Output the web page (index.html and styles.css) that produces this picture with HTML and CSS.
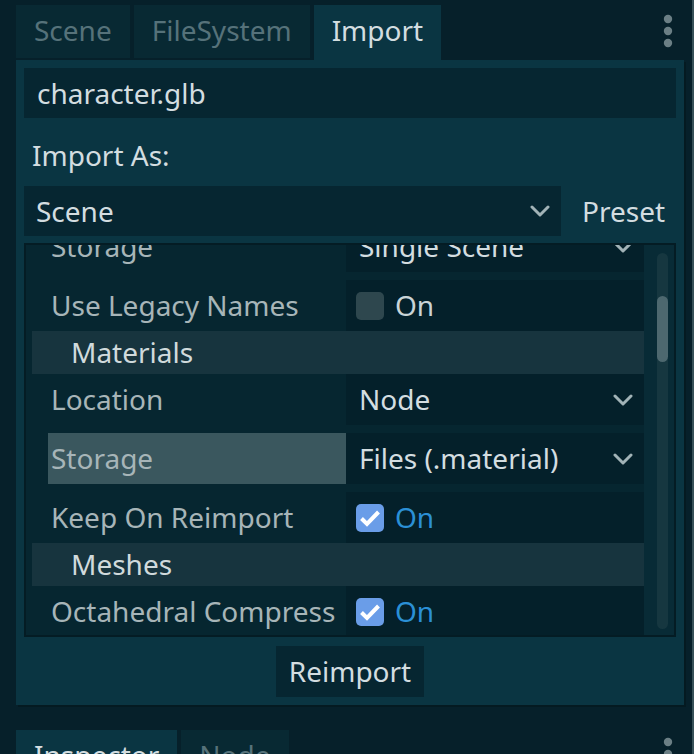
FILE: index.html
```html
<!DOCTYPE html>
<html lang="en">
<head>
  <meta charset="UTF-8">
  <meta name="viewport" content="width=device-width, initial-scale=1.0">
  <title>Import</title>
  <link rel="stylesheet" href="styles.css">
</head>
<body>
  <div class="editor">
    <div class="dock">
      <div class="tab-bar">
        <div class="tabs">
          <div class="tab">Scene</div>
          <div class="tab">FileSystem</div>
          <div class="tab active">Import</div>
        </div>
        <svg class="menu-dots" width="10" height="34" viewBox="0 0 10 34">
          <circle cx="5" cy="5" r="4.2"/>
          <circle cx="5" cy="17" r="4.2"/>
          <circle cx="5" cy="29" r="4.2"/>
        </svg>
      </div>

      <div class="dock-panel">
        <div class="line-edit">character.glb</div>
        <div class="field-label">Import As:</div>
        <div class="import-row">
          <div class="option-button">
            <span>Scene</span>
            <svg class="chevron" width="20" height="12" viewBox="0 0 20 12"><polyline points="2,2 10,10 18,2"/></svg>
          </div>
          <div class="flat-button">Preset</div>
        </div>

        <div class="inspector">
          <div class="inspector-scroll">
            <div class="inspector-content">
              <div class="prop">
                <div class="prop-label">Storage</div>
                <div class="prop-value">
                  <span>Single Scene</span>
                  <svg class="chevron" width="20" height="12" viewBox="0 0 20 12"><polyline points="2,2 10,10 18,2"/></svg>
                </div>
              </div>
              <div class="prop">
                <div class="prop-label">Use Legacy Names</div>
                <div class="prop-value check-value">
                  <span class="checkbox"></span>
                  <span>On</span>
                </div>
              </div>
              <div class="section">Materials</div>
              <div class="prop">
                <div class="prop-label">Location</div>
                <div class="prop-value">
                  <span>Node</span>
                  <svg class="chevron" width="20" height="12" viewBox="0 0 20 12"><polyline points="2,2 10,10 18,2"/></svg>
                </div>
              </div>
              <div class="prop">
                <div class="prop-label hovered">Storage</div>
                <div class="prop-value">
                  <span>Files (.material)</span>
                  <svg class="chevron" width="20" height="12" viewBox="0 0 20 12"><polyline points="2,2 10,10 18,2"/></svg>
                </div>
              </div>
              <div class="prop">
                <div class="prop-label">Keep On Reimport</div>
                <div class="prop-value check-value checked">
                  <span class="checkbox">
                    <svg width="28" height="28" viewBox="0 0 28 28"><polyline points="5.5,14.5 11,20 22.5,8"/></svg>
                  </span>
                  <span>On</span>
                </div>
              </div>
              <div class="section">Meshes</div>
              <div class="prop">
                <div class="prop-label">Octahedral Compress</div>
                <div class="prop-value check-value checked">
                  <span class="checkbox">
                    <svg width="28" height="28" viewBox="0 0 28 28"><polyline points="5.5,14.5 11,20 22.5,8"/></svg>
                  </span>
                  <span>On</span>
                </div>
              </div>
            </div>
          </div>
          <div class="scrollbar">
            <div class="scroll-track">
              <div class="scroll-thumb"></div>
            </div>
          </div>
        </div>

        <div class="button-row">
          <div class="button">Reimport</div>
        </div>
      </div>
    </div>

    <div class="dock dock-bottom">
      <div class="tab-bar">
        <div class="tabs">
          <div class="tab active">Inspector</div>
          <div class="tab">Node</div>
        </div>
        <svg class="menu-dots" width="10" height="34" viewBox="0 0 10 34">
          <circle cx="5" cy="5" r="4.2"/>
          <circle cx="5" cy="17" r="4.2"/>
          <circle cx="5" cy="29" r="4.2"/>
        </svg>
      </div>
    </div>
  </div>
</body>
</html>
```

FILE: styles.css
```css
html, body {
    margin: 0;
    height: 100%;
    overflow: hidden;
}

body {
    background-color: #06202a;
    font-family: "Noto Sans", "DejaVu Sans", sans-serif;
    font-size: 28px;
    color: #d3dde0;
}

.editor {
    width: 692px;
    height: 100%;
    border-right: 2px solid #375158;
}

/* tab bar */

.tab-bar {
    display: flex;
    justify-content: space-between;
    padding: 5px 0 0 16px;
    height: 55px;
}

.tabs {
    display: flex;
    gap: 4px;
}

.tab {
    height: 53px;
    padding: 0 18px;
    line-height: 50px;
    background-color: #082933;
    color: #56727a;
}

.tab.active {
    height: 55px;
    background-color: #0a3542;
    color: #d3dde0;
}

.menu-dots {
    margin: 9px 19px 0 0;
    fill: #6b7f85;
}

/* import dock */

.dock-panel {
    width: 652px;
    margin-left: 16px;
    padding: 8px;
    background-color: #0a3542;
    box-shadow: 2px 2px 0 #041a21;
}

.line-edit {
    height: 50px;
    padding-left: 13px;
    line-height: 50px;
    background-color: #062631;
}

.field-label {
    height: 62px;
    padding: 6px 0 0 8px;
    line-height: 62px;
}

.import-row {
    display: flex;
    height: 50px;
}

.option-button {
    display: flex;
    align-items: center;
    justify-content: space-between;
    width: 537px;
    padding: 0 11px 0 12px;
    box-sizing: border-box;
    background-color: #062631;
}

.flat-button {
    flex: 1;
    padding-left: 21px;
    line-height: 50px;
}

.chevron {
    fill: none;
    stroke: #a2b3b7;
    stroke-width: 3;
    stroke-linecap: round;
    stroke-linejoin: round;
}

/* inspector */

.inspector {
    display: flex;
    height: 390px;
    margin-top: 7px;
    border: 2px solid #041c24;
    background-color: #062630;
}

.inspector-scroll {
    flex: 1;
    overflow: hidden;
}

.inspector-content {
    margin-top: -24px;
    padding-left: 6px;
}

.prop {
    display: grid;
    grid-template-columns: 298px 298px;
    height: 51px;
    margin-left: 16px;
    line-height: 51px;
}

.prop + .prop {
    margin-top: 8px;
}

.prop-label {
    padding-left: 3px;
    color: #a7b5b8;
    white-space: nowrap;
}

.prop-label.hovered {
    background-color: #3a575e;
}

.prop-value {
    display: flex;
    align-items: center;
    justify-content: space-between;
    padding: 0 11px 0 13px;
    background-color: #04202a;
}

.check-value {
    justify-content: flex-start;
    gap: 11px;
    padding-left: 10px;
    color: #c9d4d7;
}

.checkbox {
    width: 28px;
    height: 28px;
    border-radius: 5px;
    background-color: #2e474e;
}

.checked {
    color: #2b90d6;
}

.checked .checkbox {
    background-color: #6a9de8;
}

.checkbox svg {
    display: block;
    fill: none;
    stroke: #ffffff;
    stroke-width: 4;
}

.section {
    height: 43px;
    padding-left: 39px;
    line-height: 43px;
    background-color: #17343e;
    color: #d0dadc;
}

.scrollbar {
    width: 30px;
    padding: 8px 6px 6px 13px;
    box-sizing: border-box;
    background-color: #082b36;
}

.scroll-track {
    width: 11px;
    height: 100%;
    border-radius: 6px;
    background-color: #163740;
}

.scroll-thumb {
    height: 66px;
    position: relative;
    top: 43px;
    border-radius: 6px;
    background-color: #4d686f;
}

.button-row {
    display: flex;
    justify-content: center;
    margin-top: 9px;
}

.button {
    height: 51px;
    padding: 0 13px;
    line-height: 51px;
    background-color: #062631;
    color: #d3dde0;
}

/* bottom dock */

.dock-bottom {
    margin-top: 20px;
}

.dock-bottom .menu-dots {
    margin-top: 7px;
}
```
